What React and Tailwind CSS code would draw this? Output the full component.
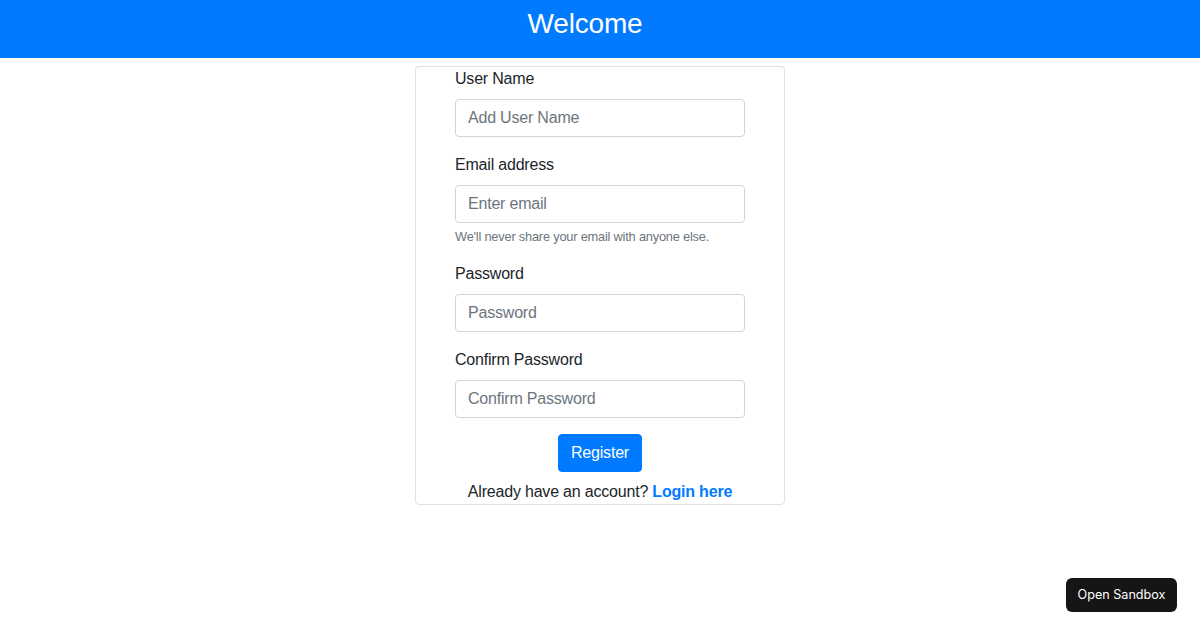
const Field = ({ label, placeholder, type = "text", help }) => (
  <div className="mb-4">
    <label className="block mb-2 text-[16px] leading-6 text-[#212529]">{label}</label>
    <input
      type={type}
      placeholder={placeholder}
      className="block w-full h-[38px] px-3 py-1.5 text-[16px] leading-6 tracking-[-0.2px] text-[#495057] bg-white border border-[#ced4da] rounded outline-none placeholder:text-[#6c757d]"
    />
    {help && <small className="block mt-1 text-[12.8px] leading-[19px] text-[#6c757d]">{help}</small>}
  </div>
);

const App = () => {
  return (
    <div className="min-h-[630px] bg-white tracking-[-0.2px] font-['Liberation_Sans',Arial,sans-serif]">
      <header className="h-[58px] bg-[#007bff] pt-[7px] pr-[30px] text-center">
        <h1 className="text-[28px] leading-[33.6px] text-white font-normal">Welcome</h1>
      </header>

      <div className="mt-2 flex justify-center">
        <form className="w-[370px] px-[39px] border border-[#dee2e6] rounded" onSubmit={(e) => e.preventDefault()}>
          <Field label="User Name" placeholder="Add User Name" />
          <Field
            label="Email address"
            placeholder="Enter email"
            type="email"
            help="We'll never share your email with anyone else."
          />
          <Field label="Password" placeholder="Password" type="password" />
          <Field label="Confirm Password" placeholder="Confirm Password" type="password" />
          <div className="flex justify-center">
            <button
              type="submit"
              className="h-[38px] px-3 text-[16px] leading-6 tracking-[-0.2px] text-white bg-[#007bff] border border-[#007bff] rounded"
            >
              Register
            </button>
          </div>
          <p className="mt-2 mb-0 text-center text-[16px] leading-6 text-[#212529]">
            Already have an account? <a href="#" className="font-bold text-[#007bff]">Login here</a>
          </p>
        </form>
      </div>

      <button className="fixed right-[23px] bottom-[18px] w-[111px] h-[34px] rounded-md bg-[#151515] text-[12.6px] tracking-normal text-white font-['Inter',sans-serif]">
        Open Sandbox
      </button>
    </div>
  );
};

export default App;
